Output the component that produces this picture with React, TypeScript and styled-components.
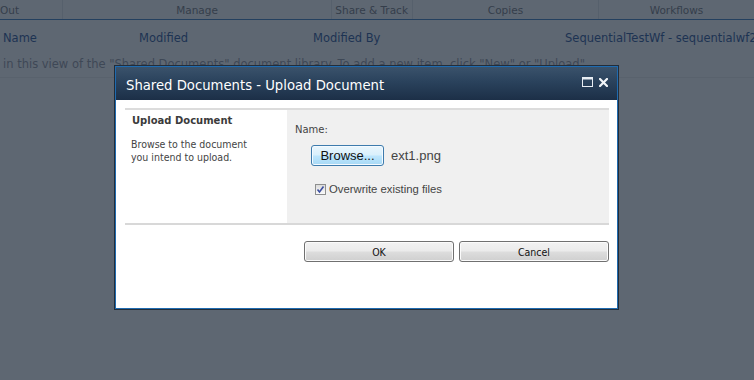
import React from "react";
import styled, { createGlobalStyle } from "styled-components";

const Global = createGlobalStyle`
  html, body { margin: 0; padding: 0; }
  body { width: 754px; height: 380px; overflow: hidden; background: #5e6772; }
  #root { width: 754px; height: 380px; }
`;

const Page = styled.div`
  position: relative;
  width: 754px;
  height: 380px;
  background: #5e6772;
  font-family: "DejaVu Sans", Verdana, sans-serif;
  overflow: hidden;
`;

const Ribbon = styled.div`
  display: grid;
  grid-template-columns: 63px 269px 81px 186px 155px;
  height: 19px;
  border-bottom: 1px solid #24405f;
`;

const RibbonGroup = styled.div<{ $align?: string; $last?: boolean }>`
  display: flex;
  align-items: center;
  justify-content: ${(p) => p.$align || "center"};
  border-right: ${(p) => (p.$last ? "none" : "1px solid #56606c")};
  font-size: 10.5px;
  color: #353e4b;
  white-space: nowrap;
  overflow: hidden;
`;

const HeaderRow = styled.div`
  display: grid;
  grid-template-columns: 136px 174px 252px 1fr;
  height: 35px;
  align-items: center;
  padding-left: 3px;
  padding-top: 1px;
  box-sizing: border-box;
  font-size: 11.5px;
  color: #1d3352;
  white-space: nowrap;
  overflow: hidden;
`;

const Notice = styled.div`
  padding: 2px 0 0 3px;
  height: 20px;
  font-size: 11.5px;
  color: #3e4856;
  white-space: nowrap;
  overflow: hidden;
  border-bottom: 1px solid #59626d;
`;

const Dialog = styled.div`
  position: absolute;
  left: 115px;
  top: 66px;
  width: 501px;
  height: 241px;
  border: 1px solid #1f6bb0;
  box-shadow: 0 0 0 1px #222d3a;
  background: #fff;
  display: flex;
  flex-direction: column;
`;

const TitleBar = styled.div`
  height: 33px;
  flex: none;
  display: flex;
  align-items: center;
  justify-content: space-between;
  padding: 0 9px 0 10px;
  background: linear-gradient(#3a526b 0%, #2a425c 45%, #1c2f47 100%);
`;

const Title = styled.div`
  color: #fff;
  font-family: "DejaVu Sans Condensed", "DejaVu Sans", Verdana, sans-serif;
  font-size: 14.7px;
  padding-top: 2px;
`;

const TitleIcons = styled.div`
  display: flex;
  align-items: center;
  gap: 6px;
  padding-bottom: 3px;
`;

const Body = styled.div`
  flex: 1;
  display: flex;
  flex-direction: column;
  padding: 8px 8px 0 9px;
`;

const Form = styled.div`
  display: grid;
  grid-template-columns: 162px 1fr;
  border-top: 2px solid #dcdcdc;
  border-bottom: 2px solid #d8d8d8;
  height: 113px;
`;

const Section = styled.div`
  padding: 5px 6px 0 6px;
  font-family: "DejaVu Sans Condensed", "DejaVu Sans", Verdana, sans-serif;
  font-size: 10.5px;
  color: #444;
`;

const SectionTitle = styled.div`
  font-family: "DejaVu Sans", Verdana, sans-serif;
  font-weight: bold;
  color: #3b3b3b;
  font-size: 10px;
  height: 23px;
  padding-left: 1px;
`;

const SectionText = styled.div`
  line-height: 13px;
`;

const Fields = styled.div`
  background: #f0f0f0;
  padding: 14px 8px 0 8px;
  font-family: "DejaVu Sans", Verdana, sans-serif;
  font-size: 10px;
  color: #444;
`;

const Label = styled.div`
  height: 16px;
`;

const FileRow = styled.div`
  display: flex;
  align-items: center;
  gap: 7px;
  margin-left: 16px;
  margin-top: 5px;
`;

const BrowseButton = styled.div`
  width: 71px;
  height: 19px;
  display: flex;
  align-items: center;
  justify-content: center;
  border: 1px solid #3d7bad;
  border-radius: 3px;
  background: linear-gradient(#eaf6fd 0%, #d9f0fc 48%, #bee6fd 52%, #a7d9f5 100%);
  box-shadow: inset 0 0 0 1px #f4faff;
  font-family: "Liberation Sans", Arial, sans-serif;
  font-size: 13px;
  color: #111;
`;

const FileName = styled.span`
  font-family: "Liberation Sans", Arial, sans-serif;
  font-size: 13px;
  color: #444;
`;

const CheckRow = styled.label`
  display: flex;
  align-items: center;
  gap: 3px;
  margin-left: 20px;
  margin-top: 17px;
  font-family: "Liberation Sans", Arial, sans-serif;
  font-size: 11.3px;
  color: #444;
`;

const Box = styled.span`
  width: 11px;
  height: 11px;
  box-sizing: border-box;
  border: 1px solid #8e8f8f;
  background: linear-gradient(#dcdcdc, #fafafa);
  display: flex;
  align-items: center;
  justify-content: center;
`;

const Actions = styled.div`
  display: flex;
  justify-content: flex-end;
  gap: 5px;
  padding-top: 16px;
`;

const ActionButton = styled.div`
  width: 148px;
  height: 19px;
  display: flex;
  align-items: center;
  justify-content: center;
  border: 1px solid #707070;
  border-radius: 3px;
  background: linear-gradient(#f2f2f2 0%, #ebebeb 48%, #dddddd 52%, #cfcfcf 100%);
  box-shadow: inset 0 0 0 1px #fbfbfb;
  font-family: "DejaVu Sans Condensed", "DejaVu Sans", Verdana, sans-serif;
  font-size: 10.5px;
  color: #111;
`;

export default function App() {
  return (
    <Page>
      <Global />
      <Ribbon>
        <RibbonGroup $align="flex-start">Out</RibbonGroup>
        <RibbonGroup>Manage</RibbonGroup>
        <RibbonGroup $align="flex-start">&nbsp;Share &amp; Track</RibbonGroup>
        <RibbonGroup>Copies</RibbonGroup>
        <RibbonGroup $last>Workflows</RibbonGroup>
      </Ribbon>
      <HeaderRow>
        <span>Name</span>
        <span>Modified</span>
        <span>Modified By</span>
        <span>SequentialTestWf - sequentialwf2</span>
      </HeaderRow>
      <Notice>
        in this view of the "Shared Documents" document library. To add a new item, click "New" or "Upload".
      </Notice>

      <Dialog>
        <TitleBar>
          <Title>Shared Documents - Upload Document</Title>
          <TitleIcons>
            <svg width="11" height="10" viewBox="0 0 11 10">
              <rect x="0.5" y="0.5" width="10" height="9" fill="none" stroke="#e8eef4" strokeWidth="1" />
              <rect x="0.5" y="0.5" width="10" height="2" fill="#e8eef4" />
            </svg>
            <svg width="9" height="9" viewBox="0 0 9 9">
              <path d="M1 1 L8 8 M8 1 L1 8" stroke="#f2f5f8" strokeWidth="2.2" strokeLinecap="square" />
            </svg>
          </TitleIcons>
        </TitleBar>
        <Body>
          <Form>
            <Section>
              <SectionTitle>Upload Document</SectionTitle>
              <SectionText>
                Browse to the document
                <br />
                you intend to upload.
              </SectionText>
            </Section>
            <Fields>
              <Label>Name:</Label>
              <FileRow>
                <BrowseButton>Browse...</BrowseButton>
                <FileName>ext1.png</FileName>
              </FileRow>
              <CheckRow>
                <Box>
                  <svg width="9" height="9" viewBox="0 0 9 9">
                    <path d="M1.5 4.5 L3.5 7 L7.5 1.5" fill="none" stroke="#3c4fa0" strokeWidth="1.6" />
                  </svg>
                </Box>
                Overwrite existing files
              </CheckRow>
            </Fields>
          </Form>
          <Actions>
            <ActionButton>OK</ActionButton>
            <ActionButton>Cancel</ActionButton>
          </Actions>
        </Body>
      </Dialog>
    </Page>
  );
}
